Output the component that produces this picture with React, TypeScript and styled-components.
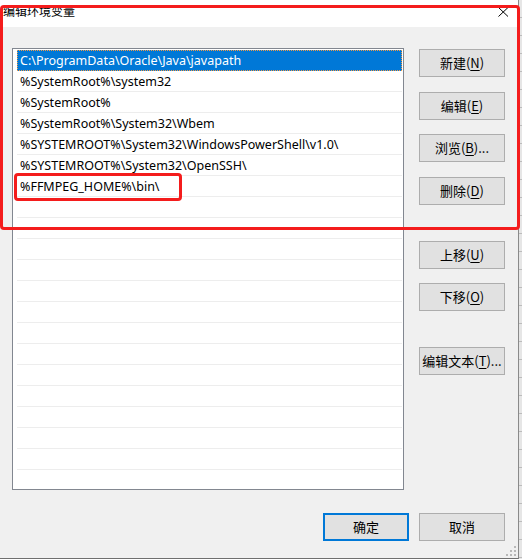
import React from "react";
import styled, { createGlobalStyle } from "styled-components";

const GlobalStyle = createGlobalStyle`
  html, body { margin: 0; padding: 0; }
  body {
    background: #e4e4e4;
    font-family: "Noto Sans", "Noto Sans CJK SC", sans-serif;
  }
`;

const Screen = styled.div`
  position: relative;
  width: 522px;
  height: 559px;
  overflow: hidden;
  display: flex;
  background: repeating-linear-gradient(to bottom, #e6e6e6 0 17px, #bcbcbc 17px 18px);
`;

const Dialog = styled.div`
  position: relative;
  width: 518px;
  height: 558px;
  background: #f0f0f0;
  border-right: 1px solid #8a8a8a;
  border-bottom: 1px solid #6f6f6f;
  display: flex;
  flex-direction: column;
`;

const TitleBar = styled.div`
  height: 27px;
  background: #fff;
  display: flex;
  justify-content: space-between;
  align-items: flex-start;
`;

const Title = styled.span`
  font-family: "Noto Sans CJK SC", sans-serif;
  font-size: 12px;
  line-height: 14px;
  color: #000;
  padding: 4px 0 0 3px;
`;

const Close = styled.svg`
  margin: 7px 9px 0 0;
`;

const Body = styled.div`
  display: flex;
  padding: 21px 0 0 12px;
`;

const ListBox = styled.div`
  box-sizing: border-box;
  width: 392px;
  height: 442px;
  background: #fff;
  border: 1px solid #828790;
  padding: 1px 1px 0 4px;
  overflow: hidden;
`;

const Row = styled.div<{ $selected?: boolean }>`
  box-sizing: border-box;
  height: 21px;
  padding: 0 3px;
  font-size: 12.5px;
  line-height: 21px;
  white-space: nowrap;
  color: ${(p) => (p.$selected ? "#fff" : "#000")};
  background: ${(p) => (p.$selected ? "#0078d7" : "transparent")};
  border-bottom: 1px solid ${(p) => (p.$selected ? "#0078d7" : "#ededed")};
  outline: ${(p) => (p.$selected ? "1px dotted #f39a45" : "none")};
  outline-offset: -1px;
`;

const SideButtons = styled.div`
  display: flex;
  flex-direction: column;
  margin-left: 15px;
`;

const Button = styled.button<{ $gap?: number; $default?: boolean }>`
  box-sizing: border-box;
  width: 86px;
  height: 28px;
  margin-top: ${(p) => p.$gap ?? 0}px;
  background: #e1e1e1;
  border: ${(p) => (p.$default ? "2px solid #0078d7" : "1px solid #adadad")};
  border-radius: 0;
  padding: 0 0 1px;
  font-family: "Noto Sans CJK SC", sans-serif;
  font-size: 13px;
  color: #000;
  u { text-decoration-thickness: 1px; text-underline-offset: 2px; }
`;

const Footer = styled.div`
  display: flex;
  justify-content: flex-end;
  gap: 10px;
  margin-top: 23px;
  padding-right: 13px;
`;

const Grip = styled.svg`
  position: absolute;
  right: 2px;
  bottom: 2px;
`;

const Mark = styled.div<{ $x: number; $y: number; $w: number; $h: number }>`
  position: absolute;
  box-sizing: border-box;
  left: ${(p) => p.$x}px;
  top: ${(p) => p.$y}px;
  width: ${(p) => p.$w}px;
  height: ${(p) => p.$h}px;
  border: 3px solid #f41c1c;
  border-radius: 4px;
  pointer-events: none;
`;

const paths = [
  "C:\\ProgramData\\Oracle\\Java\\javapath",
  "%SystemRoot%\\system32",
  "%SystemRoot%",
  "%SystemRoot%\\System32\\Wbem",
  "%SYSTEMROOT%\\System32\\WindowsPowerShell\\v1.0\\",
  "%SYSTEMROOT%\\System32\\OpenSSH\\",
  "%FFMPEG_HOME%\\bin\\",
];

const rows = [...paths, ...Array(15).fill("")];

export default function App() {
  return (
    <Screen>
      <GlobalStyle />
      <Dialog>
        <TitleBar>
          <Title>编辑环境变量</Title>
          <Close width="11" height="10" viewBox="0 0 11 10">
            <path d="M0.5 0.5 L10 9.5 M10 0.5 L0.5 9.5" stroke="#000" strokeWidth="1" fill="none" />
          </Close>
        </TitleBar>
        <Body>
          <ListBox>
            {rows.map((r, i) => (
              <Row key={i} $selected={i === 0}>
                {r}
              </Row>
            ))}
          </ListBox>
          <SideButtons>
            <Button $gap={1}>新建(<u>N</u>)</Button>
            <Button $gap={15}>编辑(<u>E</u>)</Button>
            <Button $gap={14}>浏览(<u>B</u>)...</Button>
            <Button $gap={15}>删除(<u>D</u>)</Button>
            <Button $gap={36}>上移(<u>U</u>)</Button>
            <Button $gap={14}>下移(<u>O</u>)</Button>
            <Button $gap={36}>编辑文本(<u>T</u>)...</Button>
          </SideButtons>
        </Body>
        <Footer>
          <Button $default>确定</Button>
          <Button>取消</Button>
        </Footer>
        <Grip width="10" height="10" viewBox="0 0 10 10">
          <rect x="8" y="0" width="2" height="2" fill="#b8b8b8" />
          <rect x="4" y="4" width="2" height="2" fill="#b8b8b8" />
          <rect x="8" y="4" width="2" height="2" fill="#b8b8b8" />
          <rect x="0" y="8" width="2" height="2" fill="#b8b8b8" />
          <rect x="4" y="8" width="2" height="2" fill="#b8b8b8" />
          <rect x="8" y="8" width="2" height="2" fill="#b8b8b8" />
        </Grip>
      </Dialog>
      <Mark $x={0} $y={5} $w={520} $h={225} />
      <Mark $x={14} $y={173} $w={168} $h={28} />
    </Screen>
  );
}
